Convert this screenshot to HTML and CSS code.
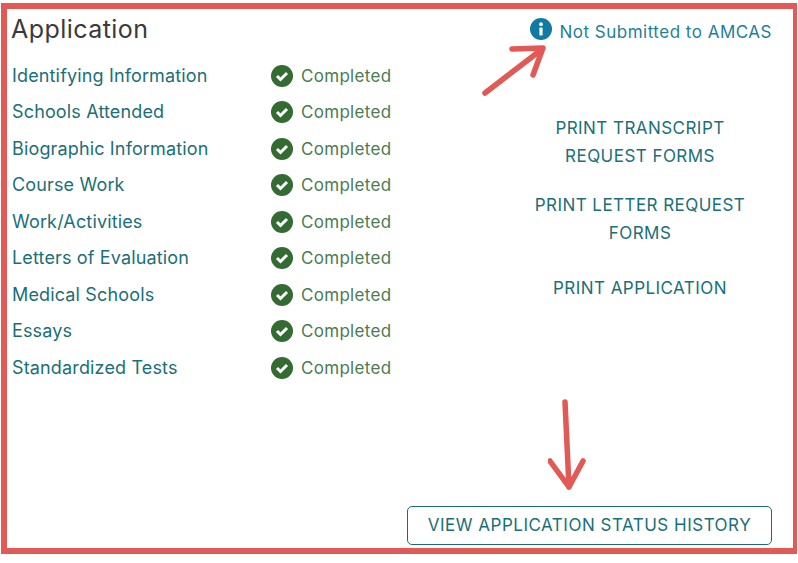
FILE: index.html
```html
<!DOCTYPE html>
<html lang="en">
<head>
<meta charset="utf-8">
<title>Application</title>
<link rel="stylesheet" href="styles.css">
</head>
<body>
<main class="frame">
  <header class="head">
    <h1 class="title">Application</h1>
    <div class="notice">
      <svg class="notice-icon" viewBox="0 0 22 22" aria-hidden="true"><circle cx="11" cy="11" r="11" fill="#0f7aa3"/><circle cx="11" cy="6.2" r="1.9" fill="#fff"/><rect x="9.4" y="9.4" width="3.2" height="8" rx=".6" fill="#fff"/></svg>
      <span>Not Submitted to AMCAS</span>
    </div>
  </header>
  <div class="body">
    <ul class="sections">
      <li class="row"><a class="name">Identifying Information</a><span class="status"><svg class="check" viewBox="0 0 22 22" aria-hidden="true"><circle cx="11" cy="11" r="11" fill="#336b32"/><path d="M6 11l3.5 3.5 6.5-6.5" fill="none" stroke="#fff" stroke-width="3"/></svg>Completed</span></li>
      <li class="row"><a class="name">Schools Attended</a><span class="status"><svg class="check" viewBox="0 0 22 22" aria-hidden="true"><circle cx="11" cy="11" r="11" fill="#336b32"/><path d="M6 11l3.5 3.5 6.5-6.5" fill="none" stroke="#fff" stroke-width="3"/></svg>Completed</span></li>
      <li class="row"><a class="name">Biographic Information</a><span class="status"><svg class="check" viewBox="0 0 22 22" aria-hidden="true"><circle cx="11" cy="11" r="11" fill="#336b32"/><path d="M6 11l3.5 3.5 6.5-6.5" fill="none" stroke="#fff" stroke-width="3"/></svg>Completed</span></li>
      <li class="row"><a class="name">Course Work</a><span class="status"><svg class="check" viewBox="0 0 22 22" aria-hidden="true"><circle cx="11" cy="11" r="11" fill="#336b32"/><path d="M6 11l3.5 3.5 6.5-6.5" fill="none" stroke="#fff" stroke-width="3"/></svg>Completed</span></li>
      <li class="row"><a class="name">Work/Activities</a><span class="status"><svg class="check" viewBox="0 0 22 22" aria-hidden="true"><circle cx="11" cy="11" r="11" fill="#336b32"/><path d="M6 11l3.5 3.5 6.5-6.5" fill="none" stroke="#fff" stroke-width="3"/></svg>Completed</span></li>
      <li class="row"><a class="name">Letters of Evaluation</a><span class="status"><svg class="check" viewBox="0 0 22 22" aria-hidden="true"><circle cx="11" cy="11" r="11" fill="#336b32"/><path d="M6 11l3.5 3.5 6.5-6.5" fill="none" stroke="#fff" stroke-width="3"/></svg>Completed</span></li>
      <li class="row"><a class="name">Medical Schools</a><span class="status"><svg class="check" viewBox="0 0 22 22" aria-hidden="true"><circle cx="11" cy="11" r="11" fill="#336b32"/><path d="M6 11l3.5 3.5 6.5-6.5" fill="none" stroke="#fff" stroke-width="3"/></svg>Completed</span></li>
      <li class="row"><a class="name">Essays</a><span class="status"><svg class="check" viewBox="0 0 22 22" aria-hidden="true"><circle cx="11" cy="11" r="11" fill="#336b32"/><path d="M6 11l3.5 3.5 6.5-6.5" fill="none" stroke="#fff" stroke-width="3"/></svg>Completed</span></li>
      <li class="row"><a class="name">Standardized Tests</a><span class="status"><svg class="check" viewBox="0 0 22 22" aria-hidden="true"><circle cx="11" cy="11" r="11" fill="#336b32"/><path d="M6 11l3.5 3.5 6.5-6.5" fill="none" stroke="#fff" stroke-width="3"/></svg>Completed</span></li>
    </ul>
    <nav class="prints">
      <a class="print">PRINT TRANSCRIPT<br>REQUEST FORMS</a>
      <a class="print">PRINT LETTER REQUEST<br>FORMS</a>
      <a class="print print-last">PRINT APPLICATION</a>
    </nav>
  </div>
  <div class="foot"><a class="history">VIEW APPLICATION STATUS HISTORY</a></div>
  <svg class="arrow arrow-up" viewBox="0 0 70 54" aria-hidden="true"><path d="M4 51L60 8M31 7L62 6 52 33" fill="none" stroke="#e25a55" stroke-width="5.5" stroke-linecap="round" stroke-linejoin="round"/></svg>
  <svg class="arrow arrow-down" viewBox="0 0 40 94" aria-hidden="true"><path d="M17 3L21 88M2 62L21 88 35 62" fill="none" stroke="#e25a55" stroke-width="5.5" stroke-linecap="round" stroke-linejoin="round"/></svg>
</main>
</body>
</html>
```
FILE: styles.css
```css
* { box-sizing: border-box; }
html, body { margin: 0; padding: 0; background: #fff; }
body { width: 798px; height: 563px; padding: 3px 0 9px 1px; font-family: Inter, "Liberation Sans", sans-serif; }
.frame { position: relative; width: 796px; height: 551px; border: 6px solid #e25a55; border-right-width: 4px; padding: 0 21px 3px 5px; display: flex; flex-direction: column; }
.head { display: flex; justify-content: space-between; align-items: flex-start; height: 48px; padding-top: 4px; }
.title { margin: 0 0 0 -1px; font-size: 25px; line-height: 32px; font-weight: 400; color: #3a3a3a; letter-spacing: .45px; }
.notice { display: flex; align-items: flex-start; gap: 7px; color: #1f7f98; font-size: 17px; line-height: 22px; margin-top: 4px; }
.notice span { margin-top: 4px; letter-spacing: .5px; }
.notice-icon { width: 22px; height: 22px; flex: none; margin-top: 1px; }
.body { flex: 1; display: flex; }
.sections { list-style: none; margin: 0; padding: 0; width: 496px; }
.row { display: flex; align-items: center; height: 36.5px; }
.name { width: 259px; color: #1b6f78; font-size: 18px; letter-spacing: .15px; }
.status { display: flex; align-items: center; gap: 8px; color: #4a7c50; font-size: 17px; margin-top: 1px; letter-spacing: .3px; }
.check { width: 22px; height: 22px; flex: none; }
.prints { flex: 1; display: flex; flex-direction: column; align-items: center; gap: 21px; padding-top: 57px; }
.print { color: #1b6f78; font-size: 17px; line-height: 28px; text-align: center; letter-spacing: .45px; }
.print-last { margin-top: 6px; }
.foot { display: flex; justify-content: flex-end; }
.history { display: block; width: 365px; height: 39px; border: 1px solid #1f6b70; border-radius: 5px; color: #1b6f78; font-size: 17px; line-height: 37px; text-align: center; letter-spacing: .5px; }
.arrow { position: absolute; }
.arrow-up { left: 474px; top: 33px; width: 70px; height: 54px; }
.arrow-down { left: 541px; top: 390px; width: 40px; height: 94px; }
```
